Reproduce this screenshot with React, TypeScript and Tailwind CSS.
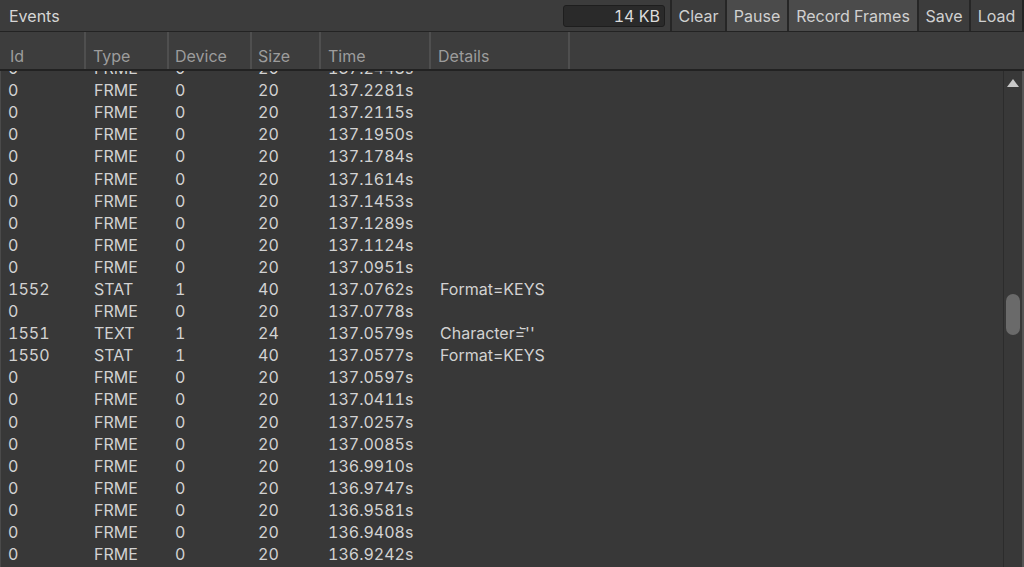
import React from "react";

type Row = { id: string; type: string; device: string; size: string; time: string; details?: string };

const frme = (time: string): Row => ({ id: "0", type: "FRME", device: "0", size: "20", time });

const rows: Row[] = [
  frme("137.2448s"),
  frme("137.2281s"),
  frme("137.2115s"),
  frme("137.1950s"),
  frme("137.1784s"),
  frme("137.1614s"),
  frme("137.1453s"),
  frme("137.1289s"),
  frme("137.1124s"),
  frme("137.0951s"),
  { id: "1552", type: "STAT", device: "1", size: "40", time: "137.0762s", details: "Format=KEYS" },
  frme("137.0778s"),
  { id: "1551", type: "TEXT", device: "1", size: "24", time: "137.0579s", details: "Character=\u0E31''" },
  { id: "1550", type: "STAT", device: "1", size: "40", time: "137.0577s", details: "Format=KEYS" },
  frme("137.0597s"),
  frme("137.0411s"),
  frme("137.0257s"),
  frme("137.0085s"),
  frme("136.9910s"),
  frme("136.9747s"),
  frme("136.9581s"),
  frme("136.9408s"),
  frme("136.9242s"),
];

const columns = [
  { name: "Id", w: "w-[86px]", pl: "pl-[10px]" },
  { name: "Type", w: "w-[83px]", pl: "pl-[7px]" },
  { name: "Device", w: "w-[83px]", pl: "pl-[6px]" },
  { name: "Size", w: "w-[69px]", pl: "pl-[6px]" },
  { name: "Time", w: "w-[110px]", pl: "pl-[7px]" },
  { name: "Details", w: "w-[139px]", pl: "pl-[7px]" },
];

const buttons = [
  { label: "Clear", w: "w-[55px]" },
  { label: "Pause", w: "w-[62px]", active: true },
  { label: "Record Frames", w: "w-[130px]", active: true },
  { label: "Save", w: "w-[52px]" },
  { label: "Load", w: "w-[53px]" },
];

export default function App() {
  return (
    <div
      className="w-[1024px] h-[567px] flex flex-col bg-[#383838] text-[#d2d2d2] overflow-hidden text-[16px] leading-none tabular-nums"
      style={{ fontFamily: "Inter, 'Noto Sans', 'Noto Sans Thai', sans-serif" }}
    >
      {/* Toolbar */}
      <div className="h-[32px] shrink-0 flex items-center bg-[#3c3c3c] border-b border-[#232323]">
        <div className="pl-[9px] flex-1 text-[#d6d6d6]">Events</div>
        <div className="h-[22px] w-[102px] mr-[5px] rounded-[3px] bg-[#2a2a2a] border border-[#1e1e1e] flex items-center justify-end pr-[4px] text-[#dcdcdc]">
          14 KB
        </div>
        <div className="h-full flex text-[#d0d0d0] border-r-2 border-[#242424]">
          {buttons.map((b) => (
            <div
              key={b.label}
              className={`${b.w} h-full flex items-center justify-center border-l-2 border-[#262626] ${
                b.active ? "bg-[#4b4b4b]" : "bg-[#3c3c3c]"
              }`}
            >
              {b.label}
            </div>
          ))}
        </div>
      </div>

      {/* Column header */}
      <div className="h-[39px] shrink-0 flex items-end bg-[#3d3d3d] border-b-[2px] border-[#222222] text-[#9c9c9c]">
        {columns.map((c) => (
          <div key={c.name} className={`${c.w} h-full flex items-end pb-[5px] border-r-[2px] border-[#4f4f4f] ${c.pl} shrink-0`}>
            {c.name}
          </div>
        ))}
      </div>

      {/* Body */}
      <div className="flex-1 flex min-h-0">
        <div className="flex-1 overflow-hidden border-l border-[#4a4a4a]">
          <div className="mt-[-14px]">
            {rows.map((r, i) => (
              <div key={i} className="h-[22.1px] flex items-center">
                <div className="w-[86px] pl-[7px] shrink-0">{r.id}</div>
                <div className="w-[82px] pl-[7px] shrink-0">{r.type}</div>
                <div className="w-[83px] pl-[6px] shrink-0">{r.device}</div>
                <div className="w-[70px] pl-[6px] shrink-0">{r.size}</div>
                <div className="w-[111px] pl-[6px] shrink-0">{r.time}</div>
                <div className="pl-[7px]">{r.details}</div>
              </div>
            ))}
          </div>
        </div>
        {/* Scrollbar */}
        <div className="w-[21px] shrink-0 flex flex-col items-center border-l border-[#2c2c2c] bg-[#383838] border-r-[2px] border-r-[#555555]">
          <svg width="12" height="8" viewBox="0 0 12 8" className="mt-[8px]">
            <path d="M6 0 L12 8 L0 8 Z" fill="#c8c8c8" />
          </svg>
          <div className="mt-[207px] w-[14px] h-[41px] rounded-full bg-[#6a6a6a]" />
        </div>
      </div>
    </div>
  );
}
